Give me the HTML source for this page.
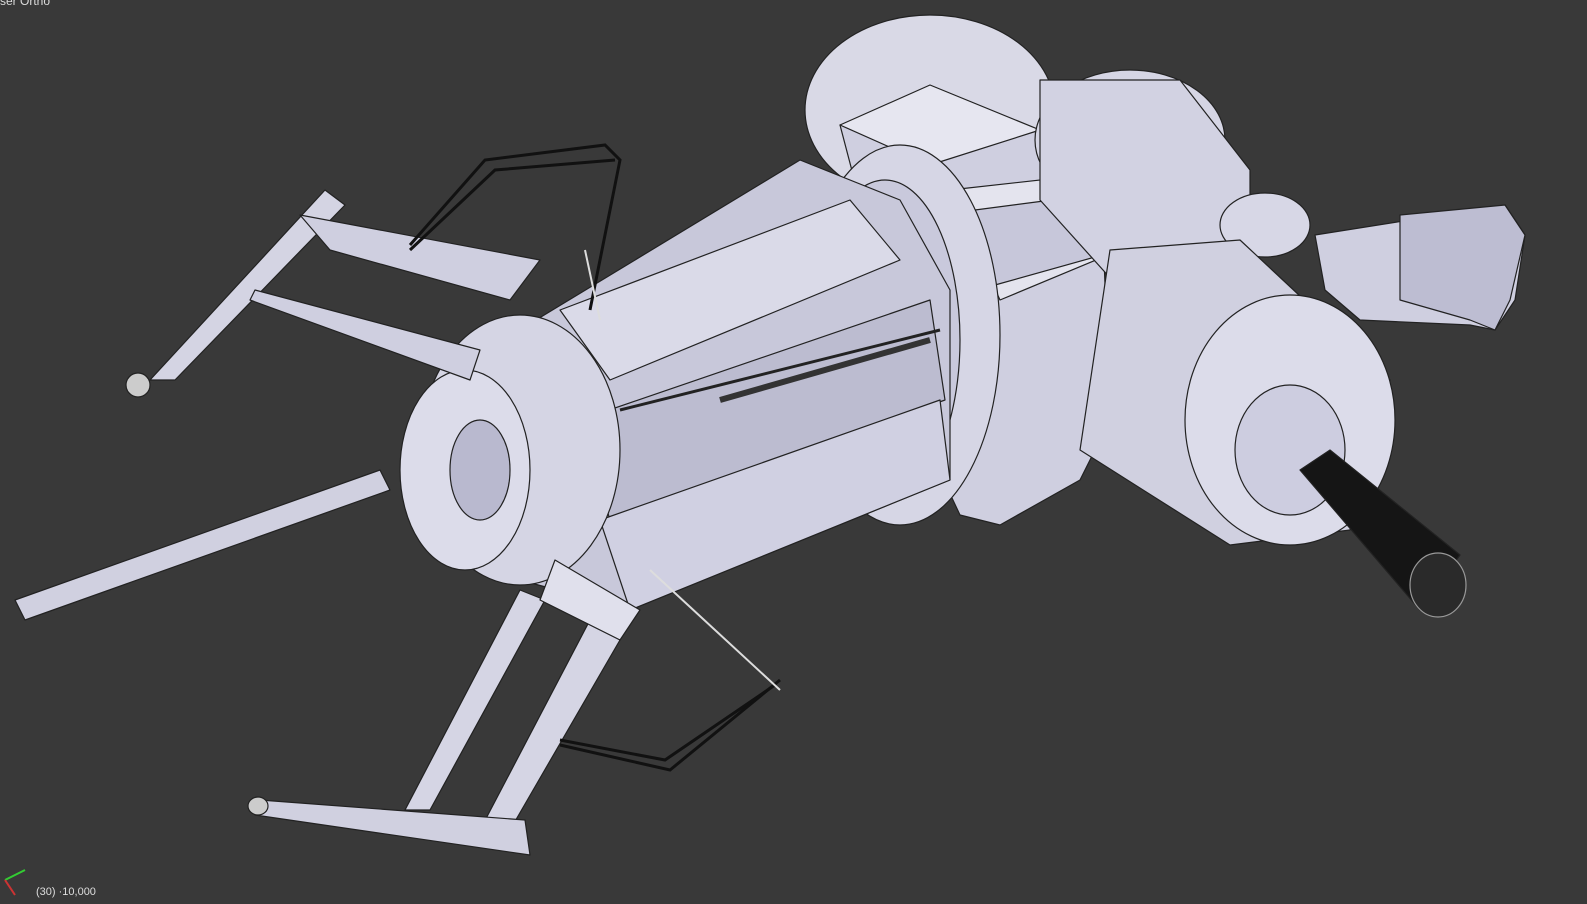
<!DOCTYPE html>
<html><head><style>
html,body{margin:0;padding:0;background:#393939;width:1587px;height:904px;overflow:hidden;font-family:"Liberation Sans",sans-serif}
.t{position:absolute;color:#ddd;font-size:12px}
</style></head><body>
<div class="t" style="left:0;top:-6px">ser Ortho</div>
<div class="t" style="left:36px;top:886px;font-size:11px">(30) ·10,000</div>
<svg width="1587" height="904" style="position:absolute;left:0;top:0">
<g stroke="#222" stroke-width="1.2" stroke-linejoin="round">
<!-- back big disk -->
<ellipse cx="930" cy="110" rx="125" ry="95" fill="#d9d9e6"/>
<!-- body -->
<polygon points="840,125 1040,130 1100,150 1110,420 1080,480 1000,525 960,515 920,430" fill="#cfcfe0"/>
<polygon points="950,190 1085,175 1120,250 1000,300" fill="#e4e4ee"/>
<polygon points="975,210 1090,195 1120,250 995,285" fill="#c7c7da"/>
<polygon points="840,125 930,85 1040,130 930,165" fill="#e6e6f0"/>
<!-- upper rear housing -->
<ellipse cx="1130" cy="140" rx="95" ry="70" fill="#d5d5e4"/>
<polygon points="1040,80 1180,80 1250,170 1250,260 1130,300 1040,200" fill="#d2d2e2"/>
<ellipse cx="1265" cy="225" rx="45" ry="32" fill="#d7d7e6"/>
<!-- handle -->
<polygon points="1315,235 1505,205 1525,235 1515,300 1495,330 1470,325 1360,320 1325,290" fill="#cfcfe0"/>
<polygon points="1400,215 1505,205 1525,235 1510,300 1495,330 1470,320 1400,300" fill="#bdbdd2"/>
<!-- rear cylinder -->
<polygon points="1110,250 1240,240 1390,380 1350,530 1230,545 1080,450" fill="#d0d0e0"/>
<ellipse cx="1290" cy="420" rx="105" ry="125" fill="#dcdcea"/>
<ellipse cx="1290" cy="450" rx="55" ry="65" fill="#cdcde0"/>
<!-- black grip -->
<polygon points="1300,470 1330,450 1460,555 1420,610" fill="#151515"/>
<ellipse cx="1438" cy="585" rx="28" ry="32" fill="#2a2a2a" stroke="#999"/>
<!-- ring -->
<ellipse cx="900" cy="335" rx="100" ry="190" fill="#d6d6e5"/>
<ellipse cx="885" cy="340" rx="75" ry="160" fill="#c9c9dc"/>
<!-- barrel -->
<polygon points="470,360 800,160 900,200 950,290 950,480 630,610 520,580" fill="#c8c8da"/>
<polygon points="560,310 850,200 900,260 610,380" fill="#dadae8"/>
<polygon points="580,420 930,300 945,400 610,520" fill="#bcbcd0"/>
<polygon points="600,520 940,400 950,480 630,610" fill="#d0d0e2"/>
<polyline points="620,410 940,330" fill="none" stroke="#222" stroke-width="3"/>
<polyline points="720,400 930,340" fill="none" stroke="#333" stroke-width="6"/>
<!-- front disk -->
<ellipse cx="520" cy="450" rx="100" ry="135" fill="#d5d5e4"/>
<ellipse cx="465" cy="470" rx="65" ry="100" fill="#dcdcea"/>
<ellipse cx="480" cy="470" rx="30" ry="50" fill="#b9b9cf"/>
<!-- upper arms -->
<polygon points="325,190 345,205 175,380 150,380" fill="#d4d4e3"/>
<polygon points="300,215 540,260 510,300 330,250" fill="#cfcfe0"/>
<polygon points="255,290 480,350 470,380 250,300" fill="#cfcfe0"/>
<ellipse cx="138" cy="385" rx="12" ry="12" fill="#ccc"/>
<polygon points="380,470 390,490 25,620 15,600" fill="#d0d0e0"/>
<!-- lower arms -->
<polygon points="520,590 545,600 430,810 405,810" fill="#d5d5e4"/>
<polygon points="590,620 620,640 510,830 480,830" fill="#d5d5e4"/>
<polygon points="260,800 525,820 530,855 255,815" fill="#d0d0e0"/>
<ellipse cx="258" cy="806" rx="10" ry="9" fill="#ccc"/>
<polygon points="555,560 640,610 620,640 540,600" fill="#e0e0ec"/>
</g>
<g stroke="#111" stroke-width="3" fill="none">
<polyline points="410,245 485,160 605,145 620,160 590,310"/>
<polyline points="410,250 495,170 615,160"/>
<polyline points="560,745 670,770 780,680"/>
<polyline points="560,740 665,760 775,685"/>
</g>
<g stroke="#ddd" stroke-width="2" fill="none">
<line x1="650" y1="570" x2="780" y2="690"/>
<line x1="585" y1="250" x2="600" y2="320"/>
</g>
<line x1="5" y1="880" x2="25" y2="870" stroke="#3c3" stroke-width="2"/>
<line x1="5" y1="880" x2="15" y2="895" stroke="#c33" stroke-width="2"/>
</svg>
</body></html>
